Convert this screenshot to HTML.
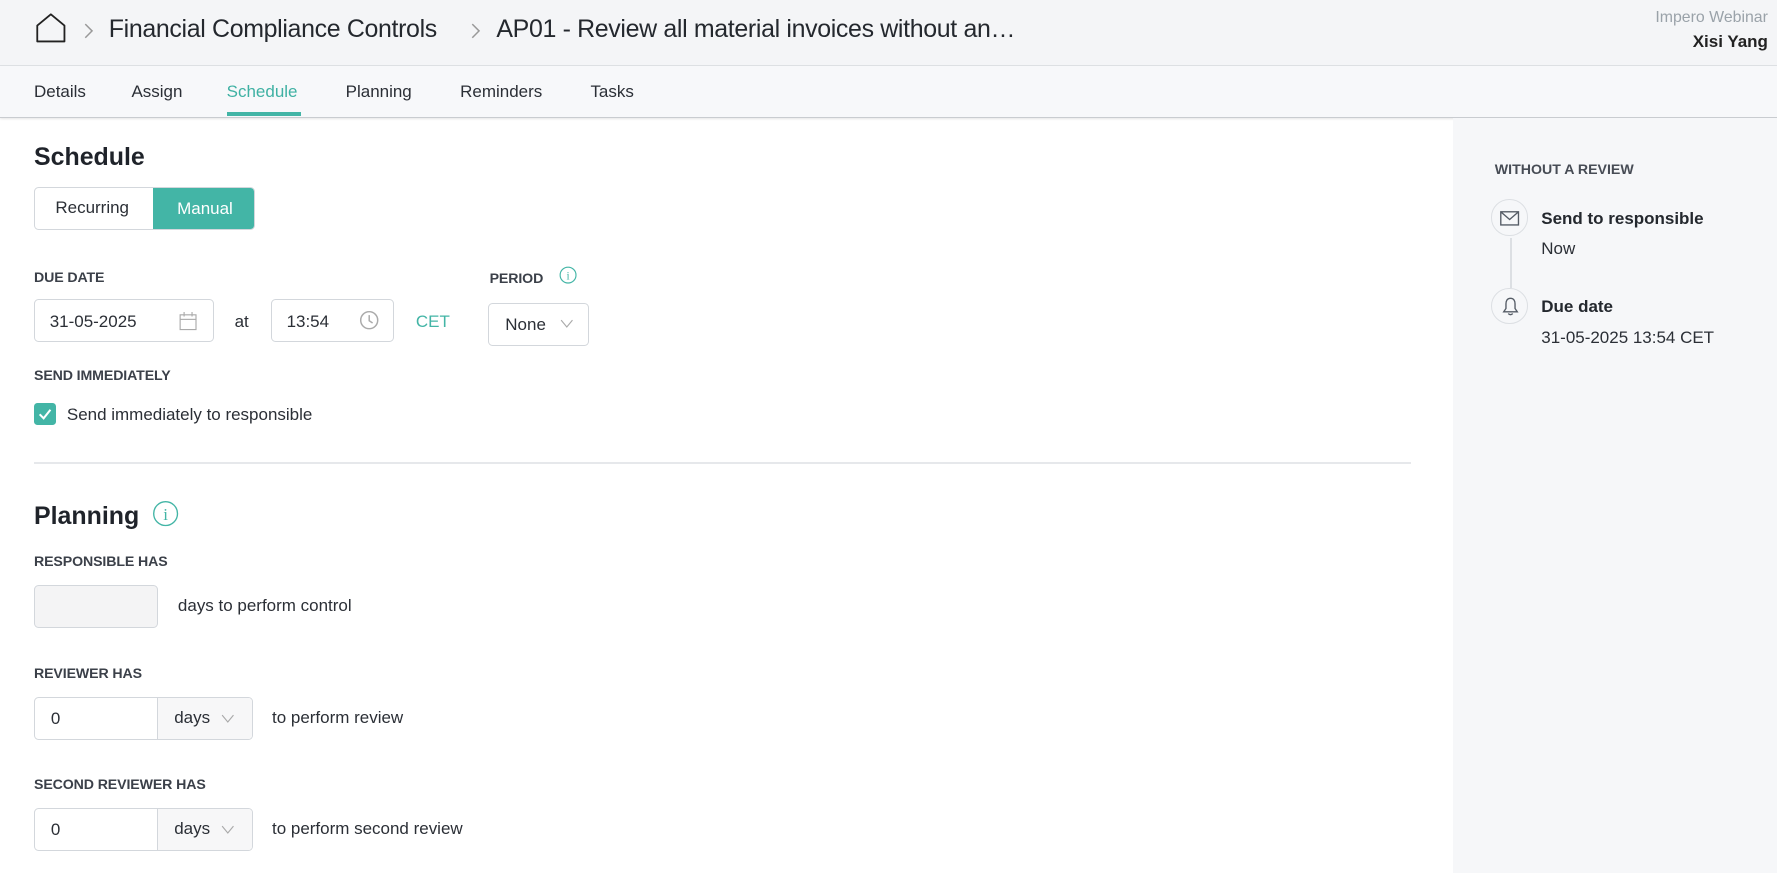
<!DOCTYPE html>
<html><head><meta charset="utf-8"><style>
html{zoom:1.13329}
body{margin:0;width:1568px;height:770px;overflow:hidden;position:relative;background:#fff;font-family:"Liberation Sans",sans-serif;color:#2b2f36}
.a{position:absolute;white-space:nowrap}
.lbl{font-size:12.5px;font-weight:bold;color:#3b4049;letter-spacing:-0.1px}
.inp{position:absolute;border:1px solid #d3d7dc;border-radius:4px;background:#fff;box-sizing:border-box}
.t15{font-size:15px;color:#2b2f36}
</style></head><body>
<div class="a" style="left:0;top:0;width:1568px;height:57px;background:#f4f5f7;border-bottom:1px solid #dfe2e5"></div>
<svg class="a" style="left:31px;top:11px" width="28" height="28" viewBox="0 0 28 28"><path d="M2 12 L14 2 L26 12 V26 H2 Z" fill="none" stroke="#222" stroke-width="1.6" stroke-linejoin="round"/></svg>
<svg class="a" style="left:73px;top:20px" width="10" height="14"><path d="M2 1L8 7L2 13" fill="none" stroke="#999" stroke-width="1.3"/></svg>
<div class="a" style="left:96px;top:13px;font-size:22px;color:#24282e;letter-spacing:-0.3px">Financial Compliance Controls</div>
<svg class="a" style="left:415px;top:20px" width="10" height="14"><path d="M2 1L8 7L2 13" fill="none" stroke="#999" stroke-width="1.3"/></svg>
<div class="a" style="left:438px;top:13px;font-size:22px;color:#24282e;letter-spacing:-0.3px">AP01 - Review all material invoices without an…</div>
<div class="a" style="right:8px;top:8px;font-size:14px;color:#9aa2a9">Impero Webinar</div>
<div class="a" style="right:8px;top:28px;font-size:15px;font-weight:bold;color:#222">Xisi Yang</div>
<div class="a" style="left:0;top:58px;width:1568px;height:45px;background:#f7f8fa;border-bottom:1px solid #c9ccd0;box-shadow:0 1px 2px rgba(0,0,0,.1)"></div>
<div class="a t15" style="left:30px;top:72px">Details</div>
<div class="a t15" style="left:116px;top:72px">Assign</div>
<div class="a t15" style="left:200px;top:72px;color:#3fb1a3">Schedule</div>
<div class="a" style="left:200px;top:99px;width:66px;height:3px;background:#43b5a6"></div>
<div class="a t15" style="left:305px;top:72px">Planning</div>
<div class="a t15" style="left:406px;top:72px">Reminders</div>
<div class="a t15" style="left:521px;top:72px">Tasks</div>
<div class="a" style="left:1282px;top:104px;width:286px;height:666px;background:#f6f7f9"></div>

<div class="a" style="left:30px;top:126px;font-size:22px;font-weight:bold;color:#1f232a">Schedule</div>
<div class="inp" style="left:30px;top:165px;width:195px;height:38px;overflow:hidden">
<div class="a t15" style="left:18px;top:9px">Recurring</div>
<div class="a" style="left:104px;top:-1px;width:92px;height:40px;background:#43b5a6;color:#fff;font-size:15px;line-height:38px;text-align:center">Manual</div></div>
<div class="a lbl" style="left:30px;top:238px">DUE DATE</div>
<div class="a lbl" style="left:432px;top:239px">PERIOD</div>
<svg class="a" style="left:493px;top:235px" width="16" height="16"><circle cx="8" cy="8" r="7" fill="none" stroke="#43b5a6"/><text x="8" y="12" font-size="10" text-anchor="middle" fill="#43b5a6" font-family="Liberation Serif">i</text></svg>
<div class="inp" style="left:30px;top:264px;width:159px;height:38px"><div class="a t15" style="left:13px;top:10px">31-05-2025</div>
<svg class="a" style="left:127px;top:10px" width="16" height="17"><rect x="1" y="2.5" width="14" height="13" fill="none" stroke="#aaa"/><line x1="1" y1="6.5" x2="15" y2="6.5" stroke="#aaa"/><line x1="4.5" y1="0" x2="4.5" y2="4" stroke="#aaa"/><line x1="11.5" y1="0" x2="11.5" y2="4" stroke="#aaa"/></svg></div>
<div class="a t15" style="left:207px;top:275px">at</div>
<div class="inp" style="left:239px;top:264px;width:109px;height:38px"><div class="a t15" style="left:13px;top:10px">13:54</div>
<svg class="a" style="left:77px;top:9px" width="18" height="18"><circle cx="9" cy="9" r="7.5" fill="none" stroke="#aaa" stroke-width="1.3"/><path d="M9 4.5V9.5L12 11.5" fill="none" stroke="#aaa" stroke-width="1.3"/></svg></div>
<div class="a" style="left:367px;top:275px;font-size:15px;color:#43b5a6">CET</div>
<div class="inp" style="left:431px;top:267px;width:89px;height:38px"><div class="a t15" style="left:14px;top:10px">None</div>
<svg class="a" style="left:62px;top:14px" width="12" height="8"><path d="M1 1L6 7L11 1" fill="none" stroke="#aaa"/></svg></div>
<div class="a lbl" style="left:30px;top:325px">SEND IMMEDIATELY</div>
<div class="a" style="left:30px;top:356px;width:19px;height:19px;border-radius:3px;background:#43b5a6"></div>
<svg class="a" style="left:30px;top:356px" width="19" height="19"><path d="M5 10L8.5 13.5L14.5 6" fill="none" stroke="#fff" stroke-width="1.8"/></svg>
<div class="a t15" style="left:59px;top:357px">Send immediately to responsible</div>
<div class="a" style="left:30px;top:408px;width:1215px;height:1px;background:#e6e8eb"></div>

<div class="a" style="left:30px;top:443px;font-size:22px;font-weight:bold;color:#1f232a">Planning</div>
<svg class="a" style="left:134px;top:441px" width="24" height="24"><circle cx="12" cy="12" r="10.5" fill="none" stroke="#43b5a6" stroke-width="1.2"/><text x="12" y="17.5" font-size="15" text-anchor="middle" fill="#43b5a6" font-family="Liberation Serif">i</text></svg>
<div class="a lbl" style="left:30px;top:489px">RESPONSIBLE HAS</div>
<div class="inp" style="left:30px;top:516px;width:109px;height:38px;background:#f4f4f5"></div>
<div class="a t15" style="left:157px;top:526px">days to perform control</div>
<div class="a lbl" style="left:30px;top:588px">REVIEWER HAS</div>
<div class="inp" style="left:30px;top:615px;width:193px;height:38px;overflow:hidden"><div class="a t15" style="left:14px;top:10px">0</div>
<div class="a" style="left:108px;top:0;width:85px;height:38px;background:#f7f7f8;border-left:1px solid #d3d7dc"><div class="a t15" style="left:14px;top:9px">days</div><svg class="a" style="left:55px;top:14px" width="12" height="8"><path d="M1 1L6 7L11 1" fill="none" stroke="#aaa"/></svg></div></div>
<div class="a t15" style="left:240px;top:625px">to perform review</div>
<div class="a lbl" style="left:30px;top:686px">SECOND REVIEWER HAS</div>
<div class="inp" style="left:30px;top:713px;width:193px;height:38px;overflow:hidden"><div class="a t15" style="left:14px;top:10px">0</div>
<div class="a" style="left:108px;top:0;width:85px;height:38px;background:#f7f7f8;border-left:1px solid #d3d7dc"><div class="a t15" style="left:14px;top:9px">days</div><svg class="a" style="left:55px;top:14px" width="12" height="8"><path d="M1 1L6 7L11 1" fill="none" stroke="#aaa"/></svg></div></div>
<div class="a t15" style="left:240px;top:723px">to perform second review</div>

<div class="a" style="left:1319px;top:143px;font-size:12.5px;font-weight:bold;color:#474c55">WITHOUT A REVIEW</div>
<div class="a" style="left:1332px;top:210px;width:2px;height:44px;background:#dcdfe3"></div>
<div class="a" style="left:1316px;top:176px;width:32px;height:32px;border-radius:50%;border:1.5px solid #dcdfe3;box-sizing:border-box;background:#f6f7f9"></div>
<svg class="a" style="left:1324px;top:186px" width="17" height="13"><rect x="0.7" y="0.7" width="15.6" height="11.6" fill="none" stroke="#555c66" stroke-width="1.2"/><path d="M1 1L8.5 7.5L16 1" fill="none" stroke="#555c66" stroke-width="1.2"/></svg>
<div class="a" style="left:1316px;top:254px;width:32px;height:32px;border-radius:50%;border:1.5px solid #dcdfe3;box-sizing:border-box;background:#f6f7f9"></div>
<svg class="a" style="left:1325px;top:261px" width="15" height="18"><path d="M7.5 2C4.5 2 3.5 4.5 3.5 7V11L1.5 14H13.5L11.5 11V7C11.5 4.5 10.5 2 7.5 2Z" fill="none" stroke="#555c66" stroke-width="1.2"/><path d="M5.5 15.5Q7.5 17.5 9.5 15.5" fill="none" stroke="#555c66" stroke-width="1.2"/></svg>
<div class="a" style="left:1360px;top:184px;font-size:15px;font-weight:bold;color:#24282e">Send to responsible</div>
<div class="a t15" style="left:1360px;top:211px">Now</div>
<div class="a" style="left:1360px;top:262px;font-size:15px;font-weight:bold;color:#24282e">Due date</div>
<div class="a t15" style="left:1360px;top:289px">31-05-2025 13:54 CET</div>
</body></html>
